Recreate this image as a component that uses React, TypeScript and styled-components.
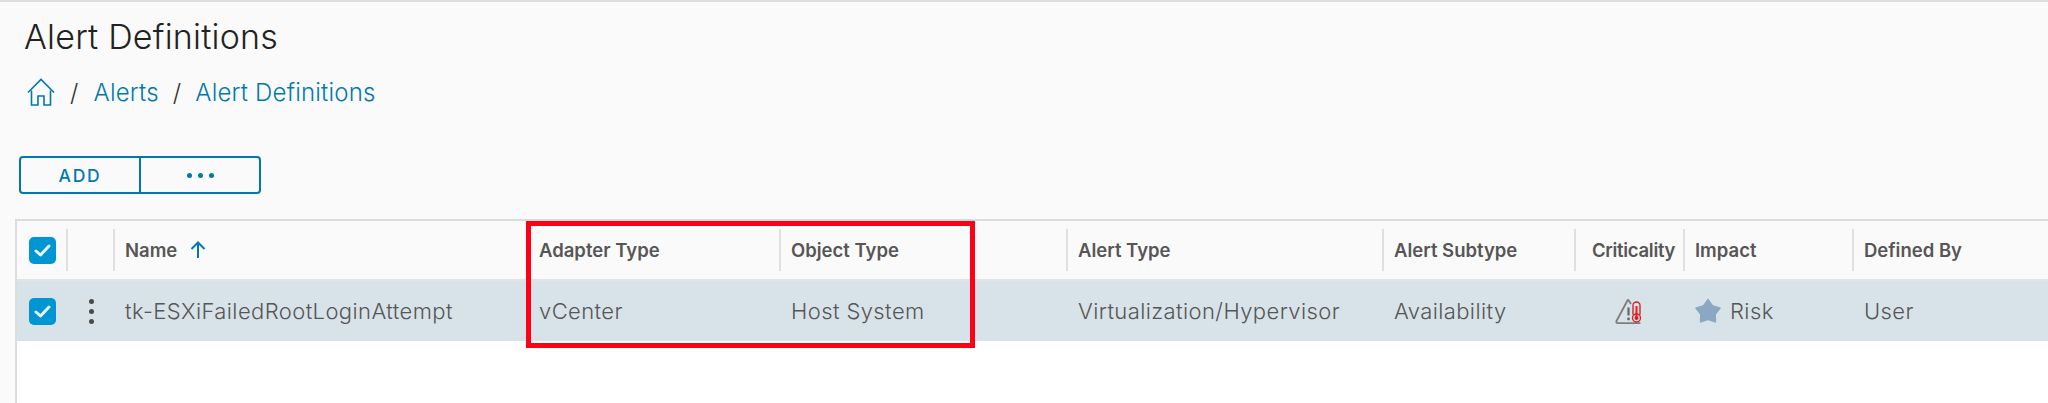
import React from "react";
import styled, { createGlobalStyle } from "styled-components";

const GlobalStyle = createGlobalStyle`
  html, body {
    margin: 0;
    padding: 0;
    height: 403px;
    overflow: hidden;
    background: #fafafa;
    font-family: Inter, "Liberation Sans", sans-serif;
  }
`;

const COLUMNS = "49px 47px 414px 252px 287px 316px 192px 109px 169px 1fr";

const Page = styled.div`
  height: 401px;
  border-top: 2px solid #dcdcdc;
  display: flex;
  flex-direction: column;
  overflow: hidden;
`;

const Title = styled.h1`
  margin: 17px 0 0 24px;
  font-size: 34px;
  line-height: 36px;
  font-weight: 300;
  letter-spacing: 0.2px;
  color: #222;
`;

const Breadcrumb = styled.nav`
  display: flex;
  align-items: center;
  height: 36px;
  margin: 19px 0 0 27px;
  font-size: 24px;
  font-weight: 300;
  letter-spacing: 0.2px;
  color: #0079ad;
`;

const Slash = styled.span<{ $first?: boolean }>`
  color: #333;
  margin: 0 ${(p) => (p.$first ? "15px" : "14px")} 0 ${(p) => (p.$first ? "15px" : "14px")};
`;

const Toolbar = styled.div`
  display: flex;
  width: 242px;
  height: 38px;
  margin: 46px 0 0 19px;
  box-sizing: border-box;
  border: 2px solid #0079ad;
  border-radius: 4px;
`;

const ToolButton = styled.button<{ $width: number }>`
  width: ${(p) => p.$width}px;
  padding: 0;
  border: 0;
  background: none;
  color: #0079ad;
  font: 500 17.5px Inter, "Liberation Sans", sans-serif;
  letter-spacing: 1.8px;
  & + & {
    border-left: 2px solid #0079ad;
  }
`;

const DotsRow = styled.span`
  display: flex;
  justify-content: center;
  gap: 6px;
`;

const HDot = styled.i`
  width: 5px;
  height: 5px;
  border-radius: 50%;
  background: #0079ad;
`;

const TableArea = styled.div`
  position: relative;
  margin: 25px 0 0 15px;
  flex: 1;
  background: #fff;
  border-top: 2px solid #dcdcdc;
  border-left: 2px solid #dcdcdc;
`;

const HeaderRow = styled.div`
  display: grid;
  grid-template-columns: ${COLUMNS};
  height: 58px;
  background: #fafafa;
  border-bottom: 2px solid #e3e3e3;
`;

const BodyRow = styled.div`
  display: grid;
  grid-template-columns: ${COLUMNS};
  height: 60px;
  background: #d8e3e9;
`;

const HeaderCell = styled.div`
  display: flex;
  align-items: center;
  min-width: 0;
  font-size: 18.5px;
  font-weight: 600;
  color: #565656;
  white-space: nowrap;
`;

const Divider = styled.span`
  flex: none;
  width: 2px;
  height: 42px;
  margin-right: 10px;
  background: #e0e0e0;
`;

const Cell = styled.div<{ $center?: boolean }>`
  display: flex;
  align-items: center;
  justify-content: ${(p) => (p.$center ? "center" : "flex-start")};
  padding-left: ${(p) => (p.$center ? 0 : 12)}px;
  font-size: 22px;
  font-weight: 300;
  letter-spacing: 0.4px;
  color: #565656;
  white-space: nowrap;
`;

const CheckCell = styled.div`
  display: flex;
  align-items: center;
  padding-left: 12px;
`;

const CheckBox = styled.span`
  display: flex;
  align-items: center;
  justify-content: center;
  width: 27px;
  height: 27px;
  border-radius: 5px;
  background: #0095d3;
`;

const KebabCell = styled.div`
  display: flex;
  flex-direction: column;
  align-items: center;
  justify-content: center;
  gap: 5px;
  padding-left: 4px;
`;

const VDot = styled.i`
  width: 5px;
  height: 5px;
  border-radius: 50%;
  background: #4a4a4a;
`;

const CriticalityLabel = styled.span`
  margin-left: 6px;
  letter-spacing: -0.3px;
`;

const RiskLabel = styled.span`
  margin-left: 9px;
`;

const Highlight = styled.div`
  position: absolute;
  left: 509px;
  top: 0;
  width: 449px;
  height: 127px;
  box-sizing: border-box;
  border: 5px solid #ff0017;
`;

const Check = () => (
  <svg width="17" height="13" viewBox="0 0 17 13" fill="none">
    <path d="M2 7l4.5 4L15 2" stroke="#e9f3f8" strokeWidth="3" strokeLinecap="round" strokeLinejoin="round" />
  </svg>
);

const HomeIcon = () => (
  <svg width="28" height="28" viewBox="0 0 28 28" fill="none" stroke="#0079ad" strokeWidth="1.6">
    <path d="M1 14.5 14 1.5l13 13" />
    <path d="M4.5 12.5V27h6.5v-9h6v9h6.5V12.5" />
  </svg>
);

const SortArrow = () => (
  <svg width="16" height="18" viewBox="0 0 16 18" fill="none" stroke="#0079ad" strokeWidth="2" style={{ marginLeft: 13 }}>
    <path d="M8 17V2M1.5 8 8 1.5 14.5 8" />
  </svg>
);

const AlertIcon = () => (
  <svg width="28" height="27" viewBox="0 0 28 27" fill="none">
    <path d="M13 1.5 1.5 23c-.6 1.2 0 2.2 1.4 2.2h22.5" stroke="#7d7d7d" strokeWidth="1.8" />
    <path d="M13 1.5l3 4.5" stroke="#7d7d7d" strokeWidth="1.8" />
    <path d="M13.5 9.5v8" stroke="#666" strokeWidth="2.2" />
    <circle cx="13.5" cy="21" r="1.4" fill="#666" />
    <rect x="18" y="4" width="7" height="15" rx="3.5" stroke="#e02020" strokeWidth="1.4" />
    <circle cx="21.5" cy="20" r="4" stroke="#e02020" strokeWidth="1.4" fill="#d8e3e9" />
    <path d="M21.5 8v12" stroke="#e02020" strokeWidth="2" />
    <circle cx="21.5" cy="20" r="2" fill="#e02020" />
  </svg>
);

const StarIcon = () => (
  <svg width="26" height="26" viewBox="0 0 26 26">
    <path
      d="M13 1l4.6 6.6 7.9 2.4-5 6.4.2 7.9-7.7-2.6-7.7 2.6.2-7.9-5-6.4 7.9-2.4z"
      fill="#8aa8c1"
      stroke="#8aa8c1"
      strokeWidth="1"
      strokeLinejoin="round"
    />
  </svg>
);

export default function App() {
  return (
    <>
      <GlobalStyle />
      <Page>
        <Title>Alert Definitions</Title>
        <Breadcrumb>
          <HomeIcon />
          <Slash $first>/</Slash>
          <span>Alerts</span>
          <Slash>/</Slash>
          <span>Alert Definitions</span>
        </Breadcrumb>
        <Toolbar>
          <ToolButton $width={118}>ADD</ToolButton>
          <ToolButton $width={120}>
            <DotsRow>
              <HDot />
              <HDot />
              <HDot />
            </DotsRow>
          </ToolButton>
        </Toolbar>
        <TableArea>
          <HeaderRow>
            <CheckCell>
              <CheckBox>
                <Check />
              </CheckBox>
            </CheckCell>
            <HeaderCell>
              <Divider />
            </HeaderCell>
            <HeaderCell>
              <Divider />
              Name
              <SortArrow />
            </HeaderCell>
            <HeaderCell>
              <Divider />
              Adapter Type
            </HeaderCell>
            <HeaderCell>
              <Divider />
              Object Type
            </HeaderCell>
            <HeaderCell>
              <Divider />
              Alert Type
            </HeaderCell>
            <HeaderCell>
              <Divider />
              Alert Subtype
            </HeaderCell>
            <HeaderCell>
              <Divider />
              <CriticalityLabel>Criticality</CriticalityLabel>
            </HeaderCell>
            <HeaderCell>
              <Divider />
              Impact
            </HeaderCell>
            <HeaderCell>
              <Divider />
              Defined By
            </HeaderCell>
          </HeaderRow>
          <BodyRow>
            <CheckCell>
              <CheckBox>
                <Check />
              </CheckBox>
            </CheckCell>
            <KebabCell>
              <VDot />
              <VDot />
              <VDot />
            </KebabCell>
            <Cell>tk-ESXiFailedRootLoginAttempt</Cell>
            <Cell>vCenter</Cell>
            <Cell>Host System</Cell>
            <Cell>Virtualization/Hypervisor</Cell>
            <Cell>Availability</Cell>
            <Cell $center>
              <AlertIcon />
            </Cell>
            <Cell>
              <StarIcon />
              <RiskLabel>Risk</RiskLabel>
            </Cell>
            <Cell>User</Cell>
          </BodyRow>
          <Highlight />
        </TableArea>
      </Page>
    </>
  );
}
